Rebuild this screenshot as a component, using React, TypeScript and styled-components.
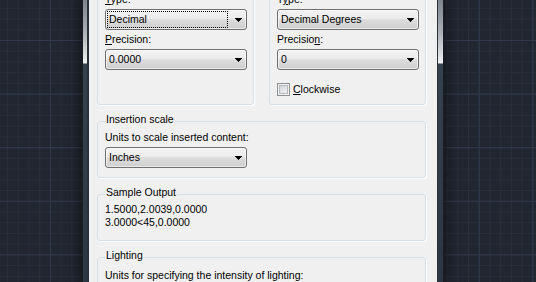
import React from 'react';
import styled, { createGlobalStyle } from 'styled-components';

const GlobalStyle = createGlobalStyle`
  html, body { margin: 0; padding: 0; background: #202530; }
  body { font-family: "Liberation Sans", Arial, sans-serif; }
  #root { width: 536px; height: 282px; overflow: hidden; }
`;

const Desktop = styled.div`
  width: 536px;
  height: 282px;
  box-sizing: border-box;
  padding-left: 82px;
  display: flex;
  align-items: stretch;
  overflow: hidden;
  background-color: #212631;
  background-image:
    linear-gradient(90deg, #313849 1px, transparent 1px),
    linear-gradient(180deg, #313849 1px, transparent 1px),
    linear-gradient(90deg, #282e3a 1px, transparent 1px),
    linear-gradient(180deg, #282e3a 1px, transparent 1px);
  background-size: 53.6px 53.6px, 53.6px 53.6px, 10.72px 10.72px, 10.72px 10.72px;
  background-position: 50px 40px, 50px 40px, 50px 40px, 50px 40px;
`;

const Window = styled.div`
  width: 362px;
  flex: none;
  display: flex;
  box-sizing: border-box;
  border-left: 1px solid #1b1f25;
  border-right: 1px solid #1b1f25;
  padding: 0 5px 0 4px;
  background: linear-gradient(
    180deg,
    #7e858d 0px,
    #a6acb2 30px,
    #d5d9dc 52px,
    #eef0f1 62px,
    #eef0f1 63px,
    #35414d 64px,
    #2c3743 100%
  );
  box-shadow: 0 0 12px 3px rgba(0, 0, 0, 0.45);
`;

const Client = styled.div`
  flex: 1;
  min-width: 0;
  background: #f0f0f0;
  border-left: 2px solid #2c3138;
  border-right: 1px solid #2c3138;
  padding: 0 11px 0 8px;
  overflow: hidden;
  font: 10.5px/13px "Liberation Sans", Arial, sans-serif;
  color: #000;
`;

const Stack = styled.div`
  display: flex;
  flex-direction: column;
  gap: 8px;
  margin-top: -27px;
`;

const TopRow = styled.div`
  display: grid;
  grid-template-columns: 157px 157px;
  column-gap: 15px;
`;

const Group = styled.fieldset<{ $pt: number; $pb: number }>`
  margin: 0;
  min-width: 0;
  min-inline-size: 0;
  padding: ${(p) => p.$pt}px 6px ${(p) => p.$pb}px 7px;
  border: 1px solid #d5dfe5;
  border-radius: 3px;
  box-shadow: 1px 1px 0 #ffffff;
`;

const Legend = styled.legend`
  padding: 0 1px 4px;
  line-height: 13px;
  color: #000;
`;

const Body = styled.div`
  display: flex;
  flex-direction: column;
  gap: 3px;
`;

const Field = styled.div`
  display: flex;
  flex-direction: column;
  align-items: flex-start;
  gap: 3px;
`;

const Label = styled.div`
  height: 13px;
  white-space: nowrap;
`;

const Key = styled.span`
  text-decoration: underline;
  text-underline-offset: 1px;
`;

const Combo = styled.div<{ $w?: number }>`
  align-self: ${(p) => (p.$w ? 'flex-start' : 'stretch')};
  width: ${(p) => (p.$w ? `${p.$w}px` : 'auto')};
  height: 21px;
  box-sizing: border-box;
  border: 1px solid #707070;
  border-radius: 3px;
  background: linear-gradient(180deg, #f2f2f2 0%, #ebebeb 50%, #dddddd 50%, #cfcfcf 100%);
  box-shadow: inset 0 0 0 1px rgba(255, 255, 255, 0.55);
  display: flex;
  align-items: center;
  padding: 0 4px 0 1px;
`;

const ComboValue = styled.div<{ $focused?: boolean }>`
  flex: 1;
  height: 17px;
  box-sizing: border-box;
  border: 1px dotted ${(p) => (p.$focused ? '#000' : 'transparent')};
  padding-left: 1px;
  line-height: 15px;
  white-space: nowrap;
  overflow: hidden;
`;

const ArrowBox = styled.div`
  width: 7px;
  height: 4px;
  margin-left: 7px;
  margin-top: 1px;
  display: flex;
`;

const Check = styled.label`
  display: flex;
  align-items: center;
  gap: 3px;
  margin-top: 10px;
  height: 13px;
`;

const CheckBox = styled.span`
  width: 13px;
  height: 13px;
  box-sizing: border-box;
  border: 1px solid #8e8f8f;
  background: linear-gradient(135deg, #cbcfd5 0%, #f6f6f6 100%);
  box-shadow: inset 0 0 0 1px #f4f4f4, inset 0 0 0 2px #b4b9bf;
  flex: none;
`;

const SampleLines = styled.div`
  display: flex;
  flex-direction: column;
`;

const SampleLine = styled.div`
  height: 13px;
  white-space: nowrap;
`;

const Arrow = () => (
  <ArrowBox>
    <svg width="7" height="4" viewBox="0 0 7 4" shapeRendering="crispEdges">
      <path d="M0 0h7v1H0z M1 1h5v1H1z M2 2h3v1H2z M3 3h1v1H3z" fill="#000" />
    </svg>
  </ArrowBox>
);

const Select = ({ value, focused, width }: { value: string; focused?: boolean; width?: number }) => (
  <Combo $w={width}>
    <ComboValue $focused={focused}>{value}</ComboValue>
    <Arrow />
  </Combo>
);

export default function App() {
  return (
    <>
      <GlobalStyle />
      <Desktop>
        <Window>
          <Client>
            <Stack>
              <TopRow>
                <Group $pt={3} $pb={8}>
                  <Legend>Length</Legend>
                  <Body>
                    <Field>
                      <Label>
                        <Key>T</Key>ype:
                      </Label>
                      <Select value="Decimal" focused />
                    </Field>
                    <Field>
                      <Label>
                        <Key>P</Key>recision:
                      </Label>
                      <Select value="0.0000" />
                    </Field>
                  </Body>
                </Group>
                <Group $pt={3} $pb={8}>
                  <Legend>Angle</Legend>
                  <Body>
                    <Field>
                      <Label>
                        T<Key>y</Key>pe:
                      </Label>
                      <Select value="Decimal Degrees" />
                    </Field>
                    <Field>
                      <Label>
                        Precisio<Key>n</Key>:
                      </Label>
                      <Select value="0" />
                    </Field>
                    <Check>
                      <CheckBox />
                      <span>
                        <Key>C</Key>lockwise
                      </span>
                    </Check>
                  </Body>
                </Group>
              </TopRow>

              <Group $pt={1} $pb={9}>
                <Legend>Insertion scale</Legend>
                <Field>
                  <Label>Units to scale inserted content:</Label>
                  <Select value="Inches" width={142} />
                </Field>
              </Group>

              <Group $pt={0} $pb={11}>
                <Legend>Sample Output</Legend>
                <SampleLines>
                  <SampleLine>1.5000,2.0039,0.0000</SampleLine>
                  <SampleLine>3.0000&lt;45,0.0000</SampleLine>
                </SampleLines>
              </Group>

              <Group $pt={3} $pb={9}>
                <Legend>Lighting</Legend>
                <Label>Units for specifying the intensity of lighting:</Label>
              </Group>
            </Stack>
          </Client>
        </Window>
      </Desktop>
    </>
  );
}
